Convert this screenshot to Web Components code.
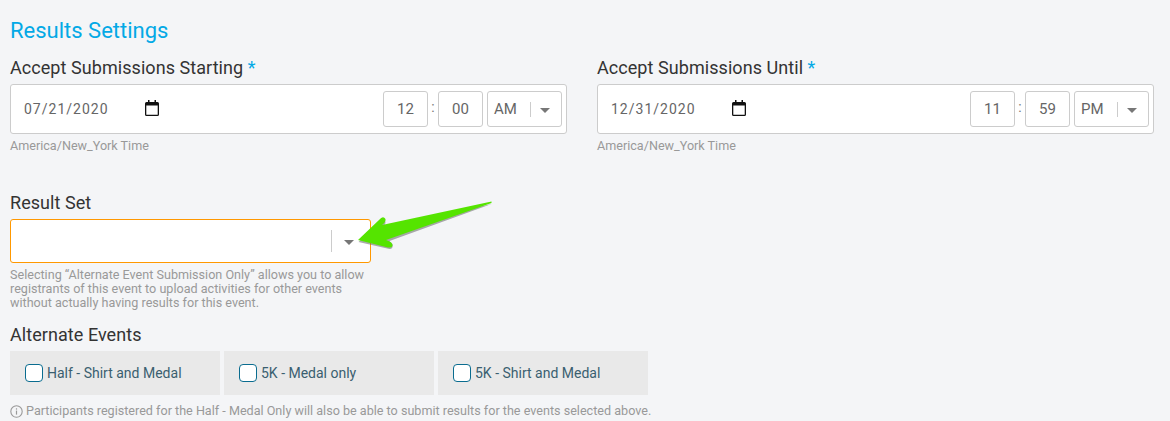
<!DOCTYPE html>
<html>
<head>
<meta charset="utf-8">
<style>
  html, body { margin: 0; padding: 0; background: #f4f5f7; }
  body { font-family: Roboto, "Liberation Sans", sans-serif; height: 421px; overflow: hidden; }
</style>
</head>
<body>
<results-settings></results-settings>
<script>
// small time / date field row
class DateTimeField extends HTMLElement {
  constructor() {
    super();
    const root = this.attachShadow({ mode: 'open' });
    const label = this.getAttribute('label');
    root.innerHTML = `
      <style>
        :host { display: block; width: 557px; }
        .label { font-size: 18px; line-height: 20px; color: #333; letter-spacing: .06px; height: 26px; }
        .label b { color: #03a9e6; font-weight: 400; }
        .box { box-sizing: border-box; height: 50px; background: #fff; border: 1px solid #ccc; border-radius: 3px;
               display: flex; align-items: center; padding: 0 4px 0 13px; }
        .date { font-size: 14px; color: #666; letter-spacing: 1px; width: 121px; }
        svg { display: block; width: 14px; height: 16px; margin-top: -2px; }
        .spacer { flex: 1; }
        .num { box-sizing: border-box; width: 45px; height: 36px; border: 1px solid #ccc; border-radius: 3px;
               display: flex; align-items: center; justify-content: center; font-size: 15px; color: #666; }
        .colon { width: 10px; text-align: center; font-size: 14px; color: #777; margin-top: -4px; }
        .ampm { box-sizing: border-box; width: 75px; height: 36px; margin-left: 4px; border: 1px solid #ccc; border-radius: 3px;
                display: flex; align-items: center; font-size: 15px; color: #666; padding-left: 6px; }
        .ampm span { width: 36px; }
        .ampm i { width: 1px; height: 15px; background: #ccc; }
        .ampm u { width: 0; height: 0; margin-left: 9px; margin-top: 3px; border: 5px solid transparent;
                  border-top: 5px solid #777; border-bottom: 0; }
        .hint { font-size: 12.6px; line-height: 14px; color: #999; margin-top: 5px; }
      </style>
      <div class="label">${label} <b>*</b></div>
      <div class="box">
        <span class="date">${this.getAttribute('date')}</span>
        <svg viewBox="0 0 14 16"><path fill="#111" d="M3 0h1.5v2h5V0H11v2h1.5A1.5 1.5 0 0 1 14 3.500v11a1.500 1.500 0 0 1-1.500 1.500h-11A1.500 1.500 0 0 1 0 14.500v-11A1.500 1.500 0 0 1 1.500 2H3zM1.300 5.500v9q0 .2.2.2h11q.2 0 .2-.2v-9z"/></svg>
        <span class="spacer"></span>
        <div class="num">${this.getAttribute('hour')}</div>
        <div class="colon">:</div>
        <div class="num">${this.getAttribute('minute')}</div>
        <div class="ampm"><span>${this.getAttribute('ampm')}</span><i></i><u></u></div>
      </div>
      <div class="hint">America/New_York Time</div>`;
  }
}
customElements.define('date-time-field', DateTimeField);

class SelectField extends HTMLElement {
  constructor() {
    super();
    const root = this.attachShadow({ mode: 'open' });
    root.innerHTML = `
      <style>
        :host { display: block; width: 361px; }
        .label { font-size: 18px; line-height: 20px; color: #333; letter-spacing: .06px; height: 26px; }
        .box { box-sizing: border-box; height: 44px; background: #fff; border: 1.5px solid #ff9800; border-radius: 3px;
               display: flex; align-items: center; justify-content: flex-end; }
        i { width: 1px; height: 22px; background: #ccc; }
        u { width: 0; height: 0; margin: 3px 16px 0 12px; border: 5px solid transparent; border-top: 5px solid #777; border-bottom: 0; }
        .hint { font-size: 12.6px; line-height: 14px; color: #999; margin-top: 5px; }
      </style>
      <div class="label"><slot name="label"></slot></div>
      <div class="box"><i></i><u></u></div>
      <div class="hint"><slot></slot></div>`;
  }
}
customElements.define('select-field', SelectField);

class CheckTile extends HTMLElement {
  constructor() {
    super();
    const root = this.attachShadow({ mode: 'open' });
    root.innerHTML = `
      <style>
        :host { display: flex; align-items: center; box-sizing: border-box; width: 210px; height: 44px; background: #e9e9e9;
                padding-left: 15px; font-size: 14px; color: #3a5f70; }
        .check { box-sizing: border-box; width: 18px; height: 18px; background: #fff; border: 1.5px solid #0a6c8f; border-radius: 4px; margin-right: 4px; }
      </style>
      <span class="check"></span><slot></slot>`;
  }
}
customElements.define('check-tile', CheckTile);

class ResultsSettings extends HTMLElement {
  constructor() {
    super();
    const root = this.attachShadow({ mode: 'open' });
    root.innerHTML = `
      <style>
        :host { display: block; position: relative; box-sizing: border-box; width: 1170px; height: 421px; padding: 18px 0 0 10px; }
        h2 { margin: 0 0 15px; font-size: 22px; line-height: 25px; font-weight: 400; color: #03a9e6; }
        .cols { display: flex; gap: 30px; }
        select-field { margin-top: 40px; }
        .sub { font-size: 18px; line-height: 20px; color: #333; letter-spacing: .06px; margin-top: 15px; height: 26px; }
        .tiles { display: flex; gap: 4px; }
        .note { display: flex; align-items: center; gap: 3px; font-size: 12.6px; line-height: 14px; color: #999; margin-top: 9px; }
        .note svg { width: 13px; height: 13px; }
        .arrow { position: absolute; left: 350px; top: 195px; width: 150px; height: 60px; overflow: visible; }
      </style>
      <h2>Results Settings</h2>
      <div class="cols">
        <date-time-field label="Accept Submissions Starting" date="07/21/2020" hour="12" minute="00" ampm="AM"></date-time-field>
        <date-time-field label="Accept Submissions Until" date="12/31/2020" hour="11" minute="59" ampm="PM"></date-time-field>
      </div>
      <select-field>
        <span slot="label">Result Set</span>
        Selecting “Alternate Event Submission Only” allows you to allow registrants of this event to upload activities for other events without actually having results for this event.
      </select-field>
      <div class="sub">Alternate Events</div>
      <div class="tiles">
        <check-tile>Half - Shirt and Medal</check-tile>
        <check-tile>5K - Medal only</check-tile>
        <check-tile>5K - Shirt and Medal</check-tile>
      </div>
      <div class="note">
        <svg viewBox="0 0 13 13"><circle cx="6.500" cy="6.500" r="5.700" fill="none" stroke="#999" stroke-width="1.100"/><rect x="5.900" y="5.600" width="1.200" height="4" fill="#999"/><rect x="5.900" y="3.300" width="1.200" height="1.300" fill="#999"/></svg>
        Participants registered for the Half - Medal Only will also be able to submit results for the events selected above.
      </div>
      <svg class="arrow" viewBox="0 0 150 60">
        <path d="M8 46 L31 25 Q35 22 35 27 L33 31 L141 8 L39 45 L42 48 Q43 53 39 53 Z" fill="#666" opacity=".55" transform="translate(0.500 1)"/>
        <path d="M8 45 L29 25 Q33 20 35.500 24 Q36 27 32 30 L141.500 6.500 L141.500 8 L36 45 Q43 47 42.500 51 Q41 53.500 36 52 Z" fill="#55e400"/>
      </svg>`;
  }
}
customElements.define('results-settings', ResultsSettings);
</script>
</body>
</html>
